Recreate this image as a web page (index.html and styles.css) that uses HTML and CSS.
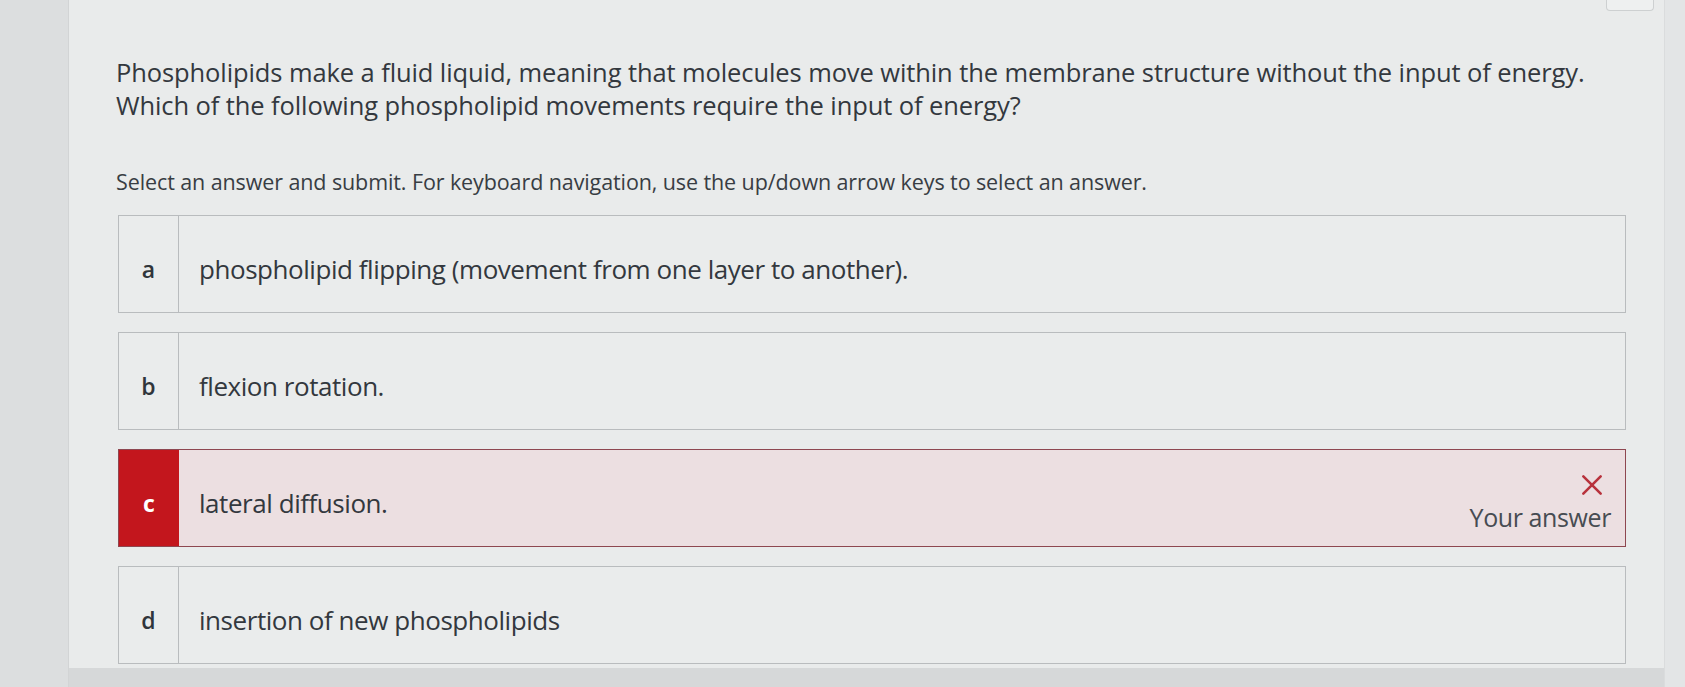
FILE: index.html
```html
<!DOCTYPE html>
<html lang="en">
<head>
<meta charset="utf-8">
<title>Question</title>
<link rel="stylesheet" href="styles.css">
</head>
<body>
  <div class="page">
    <aside class="rail"></aside>
    <main class="panel">
      <div class="topbar"><span class="tab"></span></div>
      <div class="content">
        <p class="prompt">Phospholipids make a fluid liquid, meaning that molecules move within the membrane structure without the input of energy.<br>Which of the following phospholipid movements require the input of energy?</p>
        <p class="hint">Select an answer and submit. For keyboard navigation, use the up/down arrow keys to select an answer.</p>
        <ul class="choices">
          <li class="choice">
            <span class="letter">a</span>
            <span class="text">phospholipid flipping (movement from one layer to another).</span>
          </li>
          <li class="choice">
            <span class="letter">b</span>
            <span class="text">flexion rotation.</span>
          </li>
          <li class="choice choice--wrong">
            <span class="letter">c</span>
            <span class="text">lateral diffusion.</span>
            <span class="status">
              <svg class="cross" viewBox="0 0 24 24" width="26" height="26" aria-hidden="true">
                <path d="M4 4 L20 20 M20 4 L4 20" stroke="#b8323c" stroke-width="2.4" stroke-linecap="round" fill="none"/>
              </svg>
              <span class="status-label">Your answer</span>
            </span>
          </li>
          <li class="choice">
            <span class="letter">d</span>
            <span class="text">insertion of new phospholipids</span>
          </li>
        </ul>
      </div>
      <div class="footer"></div>
    </main>
    <aside class="edge"></aside>
  </div>
</body>
</html>
```

FILE: styles.css
```css
html, body {
  margin: 0;
  padding: 0;
  height: 100%;
}

body {
  background: #dadcdd;
  font-family: "Open Sans", "Noto Sans", sans-serif;
  color: #3b4046;
}

.page {
  display: flex;
  height: 687px;
  overflow: hidden;
}

.rail {
  width: 68px;
  flex: none;
  background: #dcdedf;
  border-right: 1px solid #d2d4d5;
}

.edge {
  width: 20px;
  flex: none;
  background: #e3e5e6;
  border-left: 1px solid #dadcdd;
}

.panel {
  flex: 1;
  display: flex;
  flex-direction: column;
  background: #e9ebeb;
}

.topbar {
  height: 12px;
  flex: none;
  display: flex;
  justify-content: flex-end;
  padding-right: 10px;
}

.tab {
  width: 46px;
  height: 10px;
  background: #eef0f0;
  border: 1px solid #cdd0d1;
  border-top: none;
  border-radius: 0 0 4px 4px;
}

.content {
  flex: 1;
  padding: 0 38px 0 47px;
}

.prompt {
  margin: 44px 0 0;
  font-size: 25.5px;
  line-height: 33px;
  letter-spacing: -0.1px;
  white-space: nowrap;
  font-weight: 500;
  color: #33383e;
}

.hint {
  margin: 46px 0 0;
  font-size: 21.5px;
  line-height: 28px;
  letter-spacing: -0.1px;
  font-weight: 500;
  color: #383d43;
}

.choices {
  list-style: none;
  margin: 19px 0 0;
  padding: 0 0 0 2px;
  display: flex;
  flex-direction: column;
  gap: 19px;
}

.choice {
  display: flex;
  height: 98px;
  box-sizing: border-box;
  border: 1.5px solid #b9bcbe;
  background: #eaecec;
}

.letter {
  width: 60px;
  flex: none;
  box-sizing: border-box;
  border-right: 1.5px solid #b9bcbe;
  text-align: center;
  font-weight: 600;
  font-size: 23px;
  line-height: 30px;
  padding-top: 38px;
  color: #30353b;
}

.text {
  flex: 1;
  padding: 38px 0 0 20px;
  font-size: 26px;
  line-height: 30px;
  letter-spacing: -0.45px;
  font-weight: 500;
  color: #33383e;
}

.choice--wrong {
  border-color: #8e4750;
  background: #ecdfe1;
}

.choice--wrong .letter {
  background: #c3161d;
  color: #ffffff;
  border-right: none;
  font-weight: 700;
}

.status {
  display: flex;
  flex-direction: column;
  align-items: flex-end;
  padding: 22px 14px 0 0;
}

.cross {
  margin-right: 6px;
}

.status-label {
  margin-top: 4px;
  font-size: 25px;
  line-height: 30px;
  letter-spacing: -0.4px;
  font-weight: 500;
  color: #474c52;
}

.footer {
  height: 19px;
  flex: none;
  background: #d6d8d9;
}
```
